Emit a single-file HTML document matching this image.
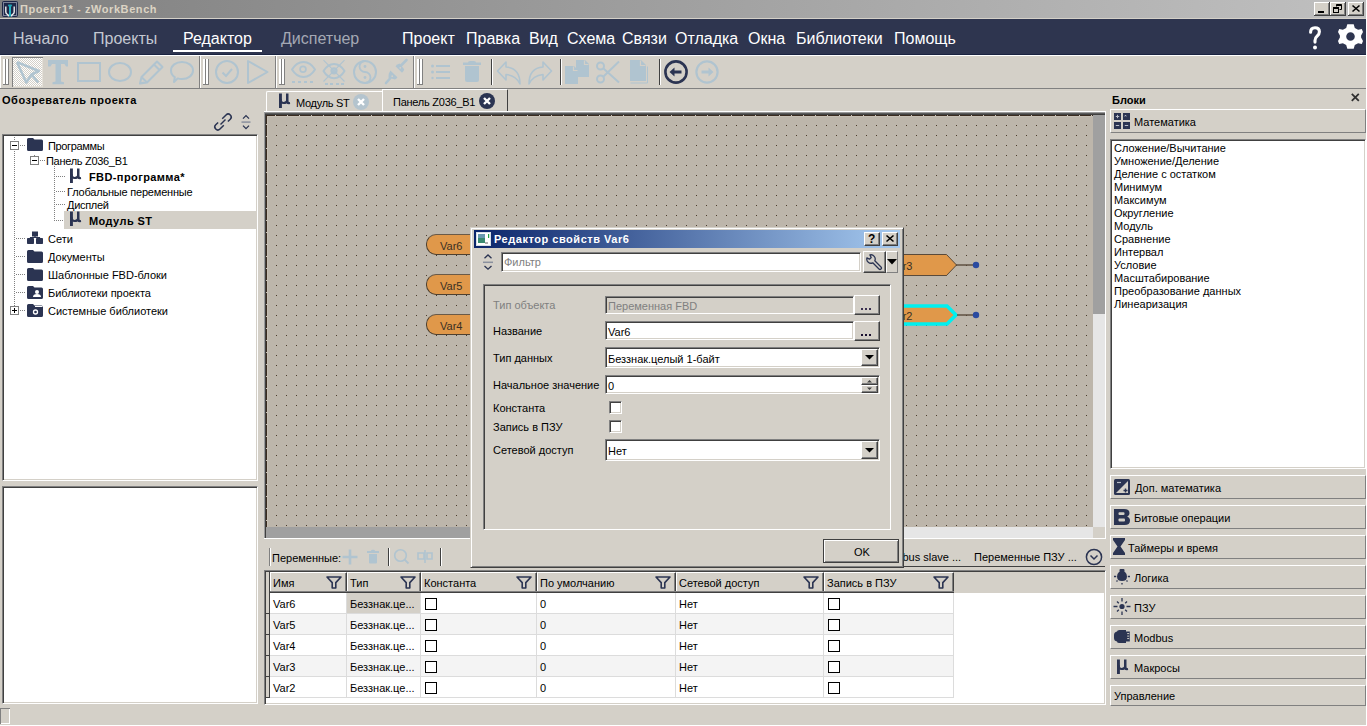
<!DOCTYPE html>
<html><head><meta charset="utf-8">
<style>
*{box-sizing:border-box;margin:0;padding:0}
html,body{width:1367px;height:726px;overflow:hidden}
body{position:relative;background:#d4d0c8;font-family:"Liberation Sans",sans-serif;font-size:11px;color:#000}
.a{position:absolute}
.t{position:absolute;white-space:nowrap;line-height:1}
svg{position:absolute;overflow:visible}
</style></head><body>

<!-- title bar -->
<div class="a" style="left:0;top:0;width:1367px;height:18px;background:linear-gradient(90deg,#808080 0%,#c0c0c0 100%)"></div>
<svg style="left:2px;top:1px" width="16" height="16" viewBox="0 0 16 16"><rect x="0" y="0" width="16" height="16" rx="2" fill="#1e2848"/><rect x="1.5" y="1.5" width="13" height="13" fill="none" stroke="#7a8298" stroke-width="1"/><path d="M3.8 5.5V11Q3.8 12.5 5.5 13.5Q6.5 14 6.5 15.5M12.2 5.5V11Q12.2 12.5 10.5 13.5Q9.5 14 9.5 15.5" stroke="#f0f0f0" stroke-width="1.4" fill="none"/><rect x="7" y="5" width="2" height="10.5" fill="#20b0c0"/><rect x="6" y="3.5" width="4" height="2" rx="0.8" fill="#20a0b0"/></svg>
<div class="t" style="left:20px;top:4px;font-weight:bold;letter-spacing:0.58px;color:#dcd4c4">Проект1* - zWorkBench</div>
<div class="a" style="left:1314px;top:2px;width:16px;height:14px;background:#d4d0c8;box-shadow:inset -1px -1px #404040,inset 1px 1px #fff,inset -2px -2px #808080"></div>
<div class="a" style="left:1318px;top:11px;width:6px;height:2px;background:#000"></div>
<div class="a" style="left:1330px;top:2px;width:16px;height:14px;background:#d4d0c8;box-shadow:inset -1px -1px #404040,inset 1px 1px #fff,inset -2px -2px #808080"></div>
<svg style="left:1333px;top:4px" width="10" height="10" viewBox="0 0 10 10"><path d="M3.5 0.5h5v5h-2M3.5 2.5V0.5" stroke="#000" fill="none"/><rect x="3.5" y="0.5" width="5" height="1.5" fill="#000"/><rect x="0.5" y="3.5" width="5" height="5" fill="none" stroke="#000"/><rect x="0.5" y="3.5" width="5" height="1.5" fill="#000"/></svg>
<div class="a" style="left:1348px;top:2px;width:16px;height:14px;background:#d4d0c8;box-shadow:inset -1px -1px #404040,inset 1px 1px #fff,inset -2px -2px #808080"></div>
<svg style="left:1352px;top:5px" width="8" height="7" viewBox="0 0 8 7"><path d="M0.5 0.5l7 6M7.5 0.5l-7 6" stroke="#000" stroke-width="1.6"/></svg>
<div class="a" style="left:1366px;top:0;width:1px;height:726px;background:#fff"></div>

<!-- nav bar -->
<div class="a" style="left:0;top:18px;width:1366px;height:1px;background:#d4d0c8"></div>
<div class="a" style="left:0;top:19px;width:1366px;height:35px;background:#2e354f"></div>
<div class="a" style="left:0;top:54px;width:1366px;height:1px;background:#1a2340"></div>
<div class="a" style="left:0;top:55px;width:1366px;height:1px;background:#fff"></div>
<div class="t" style="left:13px;top:31px;font-size:16px;color:#c4c8d2">Начало</div>
<div class="t" style="left:93px;top:31px;font-size:16px;color:#c4c8d2">Проекты</div>
<div class="t" style="left:183px;top:31px;font-size:16px;color:#fff">Редактор</div>
<div class="a" style="left:173px;top:50px;width:89px;height:2px;background:#fff"></div>
<div class="t" style="left:281px;top:31px;font-size:16px;color:#a4a8b4">Диспетчер</div>
<div class="t" style="left:402px;top:31px;font-size:16px;color:#fff">Проект</div>
<div class="t" style="left:466px;top:31px;font-size:16px;color:#fff">Правка</div>
<div class="t" style="left:529px;top:31px;font-size:16px;color:#fff">Вид</div>
<div class="t" style="left:567px;top:31px;font-size:16px;color:#fff">Схема</div>
<div class="t" style="left:622px;top:31px;font-size:16px;color:#fff">Связи</div>
<div class="t" style="left:675px;top:31px;font-size:16px;color:#fff">Отладка</div>
<div class="t" style="left:748px;top:31px;font-size:16px;color:#fff">Окна</div>
<div class="t" style="left:796px;top:31px;font-size:16px;color:#fff">Библиотеки</div>
<div class="t" style="left:894px;top:31px;font-size:16px;color:#fff">Помощь</div>
<svg style="left:1308px;top:26px" width="14" height="25" viewBox="0 0 14 25"><path d="M2.6 6.3Q2.6 1.7 7 1.7Q11.4 1.7 11.4 5.8Q11.4 8.3 9 10.2Q7 11.8 7 14.5v1.6" stroke="#fff" stroke-width="3.1" fill="none" stroke-linecap="round"/><circle cx="7" cy="21.6" r="2" fill="#fff"/></svg>
<svg style="left:1338px;top:24px" width="25" height="25" viewBox="-12.5 -12.5 25 25"><path fill="#fff" fill-rule="evenodd" d="M-3.2,-12.2 L3.2,-12.2 L4.3,-8.6 L7.6,-6.7 L11.3,-7.5 L12.5,-4.5 L10.6,-1.1 L10.6,1.1 L12.5,4.5 L11.3,7.5 L7.6,6.7 L4.3,8.6 L3.2,12.2 L-3.2,12.2 L-4.3,8.6 L-7.6,6.7 L-11.3,7.5 L-12.5,4.5 L-10.6,1.1 L-10.6,-1.1 L-12.5,-4.5 L-11.3,-7.5 L-7.6,-6.7 L-4.3,-8.6 Z M0,-4.3 A4.3,4.3 0 1,0 0,4.3 A4.3,4.3 0 1,0 0,-4.3Z"/></svg>

<!-- toolbar -->
<div class="a" style="left:0;top:56px;width:1px;height:32px;background:#fff"></div>
<div class="a" style="left:0;top:88px;width:1366px;height:1px;background:#808080"></div>
<div class="a" style="left:3px;top:59px;width:3px;height:26px;background:#fff;box-shadow:inset -1px -1px #808080"></div><div class="a" style="left:6px;top:59px;width:3px;height:26px;background:#fff;box-shadow:inset -1px -1px #808080"></div>
<div class="a" style="left:12px;top:57px;width:31px;height:30px;background-color:#fff;background-image:linear-gradient(45deg,#d4d0c8 25%,transparent 25%,transparent 75%,#d4d0c8 75%),linear-gradient(45deg,#d4d0c8 25%,transparent 25%,transparent 75%,#d4d0c8 75%);background-size:2px 2px;background-position:0 0,1px 1px;box-shadow:inset 1px 1px #808080,inset -1px -1px #e4e0d8"></div>
<svg style="left:0;top:0" width="730" height="90" viewBox="0 0 730 90" fill="none" stroke="#b0c4d0" stroke-width="2">
<path d="M17 62.2L38.8 71L31.5 74.5L38.2 82.5M17 62.2L26.3 82.5L31.5 74.5" stroke-linejoin="round" stroke-width="2.5"/>
<path d="M48 60h20v6.5h-2l-1.5-2.5h-3.5v17.5l3 .8v2H52.5v-2l3-.8V64h-3.5L50.5 66.5H48z" fill="#b0c4d0" stroke="none"/>
<rect x="78" y="63" width="22" height="18"/>
<ellipse cx="120" cy="72" rx="11" ry="9"/>
<path d="M140 83.5l1.5-6.5L157 61.5l5.5 5.5L147 82.5zM141.5 77l5.5 5.5M154 64.5l5.5 5.5M140 83.5l4-1" stroke-linejoin="round"/>
<path d="M182 62c6.2 0 11 3.6 11 8.5s-4.8 8.5-11 8.5c-1.5 0-3-.2-4.3-.6L174 82l.8-4.8C172.4 75.6 171 73.2 171 70.5 171 65.6 175.8 62 182 62z" stroke-linejoin="round"/>
<circle cx="227" cy="72" r="11"/>
<path d="M222.5 72.5l3.5 3.5 6-7"/>
<path d="M248 61v22l19.5-11z" stroke-linejoin="round"/>
<path d="M292 69.5C298 59.5 309 59.5 315 69.5C309 79.5 298 79.5 292 69.5z" stroke-linejoin="round"/>
<circle cx="303" cy="69.3" r="2.9" stroke-width="1.7"/>
<path d="M292 82h3M298 82h3M304 82h3M310 82h3" stroke-width="2"/>
<path d="M323.5 71C329 61.5 339 61.5 344.5 71C339 80.5 329 80.5 323.5 71z" stroke-linejoin="round"/>
<circle cx="334" cy="70.8" r="3.6" fill="#b0c4d0" stroke="none"/><circle cx="334" cy="70.8" r="1.2" fill="#c8d2d6" stroke="none"/>
<path d="M323.5 60.2l21 21.3M344.5 60.2l-21 21.3" stroke-width="1.1"/>
<path d="M325 84h3M330 84h3M336 84h3M341 84h3" stroke-width="2"/>
<circle cx="365" cy="72" r="11"/>
<path d="M365 61A5.5 5.5 0 0 0 365 72A5.5 5.5 0 0 1 365 83" stroke-width="1.8"/>
<circle cx="365" cy="66.5" r="1.4" fill="#b0c4d0" stroke="none"/><circle cx="365" cy="77.5" r="1.4" fill="#b0c4d0" stroke="none"/>
<path d="M395.5 66.2Q397 64 399.6 63.4L404.2 69.2Q403.8 71.5 402 72.8z" fill="#b0c4d0" stroke="none"/><path d="M401 65.5l5.5-5.5" stroke-width="2.6" stroke-linecap="round"/><path d="M390.4 70.5L397.4 77.3Q396.5 79 394.9 79.6L388.5 77.8Q388.3 73 390.4 70.5z" fill="#b0c4d0" stroke="none"/><path d="M390 78.5l-4 4.5" stroke-width="2.6" stroke-linecap="round"/><circle cx="400.3" cy="67.8" r="0.9" fill="#d4d0c8" stroke="none"/><circle cx="392.2" cy="76.2" r="0.9" fill="#d4d0c8" stroke="none"/>
<circle cx="432.5" cy="66" r="1.5" fill="#b0c4d0" stroke="none"/><circle cx="432.5" cy="72" r="1.5" fill="#b0c4d0" stroke="none"/><circle cx="432.5" cy="78" r="1.2" fill="#b0c4d0" stroke="none"/>
<path d="M436 66h14M436 72h14M436 78h14" stroke-width="2"/>
<path d="M463 62.5h18v2.5h-18z M468 62.5q0-1.5 2-1.5h4q2 0 2 1.5" fill="#b0c4d0" stroke="none"/>
<path d="M465 66h14v14q0 2-2 2h-10q-2 0-2-2z" fill="#b0c4d0" stroke="none"/>
<path d="M497.5 71l8.5-9v5q14 1 14 17q-4-8.5-14-9.5v5.5z" stroke-linejoin="round" stroke-width="1.6"/>
<path d="M551.5 71l-8.5-9v5q-14 1-14 17q4-8.5 14-9.5v5.5z" stroke-linejoin="round" stroke-width="1.6"/>
<path d="M576 60h9l4 4v13h-13zM565 66h9l4 4v14h-13z" fill="#b0c4d0" stroke="none"/>
<path d="M584.5 60.5v4h4M573.5 66.5v4h4" stroke="#d4d0c8" stroke-width="1.2"/>
<circle cx="600.5" cy="66" r="3.5"/><circle cx="600.5" cy="79" r="3.5"/>
<path d="M603.5 68.5l15.5 14M603.5 76.5l15.5-15"/>
<path d="M630 60h11l5 5v16h-16z" fill="#b0c4d0" stroke="none"/>
<path d="M640.5 60.5v5h5" stroke="#d4d0c8" stroke-width="1.2"/>
<path d="M647.5 66.5v16.5h-17" stroke-width="1"/>
<circle cx="676" cy="72" r="10.6" stroke="#2b3452" stroke-width="2.6"/>
<path d="M669.5 72l5-4.5v3h7v3h-7v3z" fill="#2b3452" stroke="none"/>
<circle cx="707" cy="72" r="10.6" stroke-width="2.2"/>
<path d="M713.5 72l-5-4.5v3h-7v3h7v3z" fill="#b0c4d0" stroke="none"/>
</svg>
<div class="a" style="left:199px;top:56px;width:1px;height:32px;background:#808080"></div><div class="a" style="left:200px;top:56px;width:1px;height:32px;background:#fff"></div>
<div class="a" style="left:203px;top:59px;width:3px;height:26px;background:#fff;box-shadow:inset -1px -1px #808080"></div><div class="a" style="left:206px;top:59px;width:3px;height:26px;background:#fff;box-shadow:inset -1px -1px #808080"></div>
<div class="a" style="left:275px;top:56px;width:1px;height:32px;background:#808080"></div><div class="a" style="left:276px;top:56px;width:1px;height:32px;background:#fff"></div>
<div class="a" style="left:279px;top:59px;width:3px;height:26px;background:#fff;box-shadow:inset -1px -1px #808080"></div><div class="a" style="left:282px;top:59px;width:3px;height:26px;background:#fff;box-shadow:inset -1px -1px #808080"></div>
<div class="a" style="left:413px;top:56px;width:1px;height:32px;background:#808080"></div><div class="a" style="left:414px;top:56px;width:1px;height:32px;background:#fff"></div>
<div class="a" style="left:417px;top:59px;width:3px;height:26px;background:#fff;box-shadow:inset -1px -1px #808080"></div><div class="a" style="left:420px;top:59px;width:3px;height:26px;background:#fff;box-shadow:inset -1px -1px #808080"></div>
<div class="a" style="left:491px;top:59px;width:1px;height:26px;background:#404040"></div><div class="a" style="left:492px;top:59px;width:1px;height:26px;background:#fff"></div>
<div class="a" style="left:560px;top:59px;width:1px;height:26px;background:#404040"></div><div class="a" style="left:561px;top:59px;width:1px;height:26px;background:#fff"></div>
<div class="a" style="left:659px;top:59px;width:1px;height:26px;background:#404040"></div><div class="a" style="left:660px;top:59px;width:1px;height:26px;background:#fff"></div>

<!-- left panel -->
<div class="t" style="left:2px;top:95px;font-weight:bold;letter-spacing:0.52px">Обозреватель проекта</div>
<svg style="left:214px;top:113px" width="20" height="20" viewBox="0 0 20 20"><g fill="none" stroke="#2b3452" stroke-width="1.5"><path transform="translate(12.6,5.6) rotate(-45)" d="M-3.2,-3 H2.2 A3 3 0 0 1 2.2 3 H-1.2"/><path transform="translate(5.4,12.4) rotate(-45)" d="M3.2,3 H-2.2 A3 3 0 0 1 -2.2 -3 H1.2"/><path d="M6.5 11.5l5-5"/></g></svg>
<svg style="left:240px;top:113px" width="12" height="18" viewBox="0 0 12 18"><path d="M3 5.6l3-3 3 3M3 12.6l3 3 3-3" fill="none" stroke="#2b3452" stroke-width="1.3"/><path d="M1.5 9.1h9" stroke="#8a909e" stroke-width="1.5"/></svg>
<div class="a" style="left:2px;top:134px;width:256px;height:347px;background:#fff;border-top:1px solid #808080;border-left:1px solid #808080;border-right:1px solid #fff;border-bottom:1px solid #fff;box-shadow:inset 1px 1px #404040,inset -1px -1px #d4d0c8"></div>
<div class="a" style="left:2px;top:486px;width:256px;height:218px;background:#fff;border-top:1px solid #808080;border-left:1px solid #808080;border-right:1px solid #fff;border-bottom:1px solid #fff;box-shadow:inset 1px 1px #404040,inset -1px -1px #d4d0c8"></div>
<div class="a" style="left:14px;top:137px;width:1px;height:174px;background-image:linear-gradient(#808080 50%,transparent 50%);background-size:1px 2px"></div>
<div class="a" style="left:34px;top:155px;width:1px;height:1px;background:#808080"></div>
<div class="a" style="left:54px;top:166px;width:1px;height:55px;background-image:linear-gradient(#808080 50%,transparent 50%);background-size:1px 2px"></div>
<div class="a" style="left:20px;top:145px;width:5px;height:1px;background-image:linear-gradient(90deg,#808080 50%,transparent 50%);background-size:2px 1px"></div>
<div class="a" style="left:40px;top:160px;width:6px;height:1px;background-image:linear-gradient(90deg,#808080 50%,transparent 50%);background-size:2px 1px"></div>
<div class="a" style="left:56px;top:176px;width:9px;height:1px;background-image:linear-gradient(90deg,#808080 50%,transparent 50%);background-size:2px 1px"></div>
<div class="a" style="left:56px;top:191px;width:9px;height:1px;background-image:linear-gradient(90deg,#808080 50%,transparent 50%);background-size:2px 1px"></div>
<div class="a" style="left:56px;top:204px;width:9px;height:1px;background-image:linear-gradient(90deg,#808080 50%,transparent 50%);background-size:2px 1px"></div>
<div class="a" style="left:56px;top:220px;width:9px;height:1px;background-image:linear-gradient(90deg,#808080 50%,transparent 50%);background-size:2px 1px"></div>
<div class="a" style="left:16px;top:238px;width:9px;height:1px;background-image:linear-gradient(90deg,#808080 50%,transparent 50%);background-size:2px 1px"></div>
<div class="a" style="left:16px;top:256px;width:9px;height:1px;background-image:linear-gradient(90deg,#808080 50%,transparent 50%);background-size:2px 1px"></div>
<div class="a" style="left:16px;top:274px;width:9px;height:1px;background-image:linear-gradient(90deg,#808080 50%,transparent 50%);background-size:2px 1px"></div>
<div class="a" style="left:16px;top:292px;width:9px;height:1px;background-image:linear-gradient(90deg,#808080 50%,transparent 50%);background-size:2px 1px"></div>
<div class="a" style="left:20px;top:310px;width:5px;height:1px;background-image:linear-gradient(90deg,#808080 50%,transparent 50%);background-size:2px 1px"></div>
<svg style="left:10px;top:141px" width="9" height="9" viewBox="0 0 9 9"><rect x="0.5" y="0.5" width="8" height="8" fill="#fff" stroke="#808080"/><path d="M2 4.5h5" stroke="#000"/></svg>
<svg style="left:30px;top:156px" width="9" height="9" viewBox="0 0 9 9"><rect x="0.5" y="0.5" width="8" height="8" fill="#fff" stroke="#808080"/><path d="M2 4.5h5" stroke="#000"/></svg>
<svg style="left:10px;top:306px" width="9" height="9" viewBox="0 0 9 9"><rect x="0.5" y="0.5" width="8" height="8" fill="#fff" stroke="#808080"/><path d="M2 4.5h5" stroke="#000"/><path d="M4.5 2v5" stroke="#000"/></svg>
<svg style="left:27px;top:138px" width="16" height="13" viewBox="0 0 16 13"><path d="M0 1.5Q0 0 1.5 0H6l1.5 1.5H14.5Q16 1.5 16 3V11.5Q16 13 14.5 13H1.5Q0 13 0 11.5z" fill="#2b3452"/></svg>
<div class="t" style="left:48px;top:141px;letter-spacing:-0.35px">Программы</div>
<div class="t" style="left:46px;top:156px;letter-spacing:-0.3px">Панель Z036_B1</div>
<svg style="left:70px;top:168px" width="12" height="15" viewBox="0 0 12 15"><rect x="0" y="0.5" width="2.9" height="14.5" fill="#2b3452"/><rect x="7" y="0.5" width="2.5" height="9.5" fill="#2b3452"/><path d="M1.5 6q0 4 3.2 4Q7.5 10 8.5 7.5M8.2 9.2q.6 1.2 2.8.8" stroke="#2b3452" stroke-width="2.2" fill="none"/></svg>
<div class="t" style="left:89px;top:172px;font-weight:bold;letter-spacing:0.4px;">FBD-программа*</div>
<div class="t" style="left:67px;top:187px;letter-spacing:-0.2px">Глобальные переменные</div>
<div class="t" style="left:67px;top:200px;letter-spacing:-0.3px">Дисплей</div>
<div class="a" style="left:64px;top:211px;width:192px;height:18px;background:#d4d0c8"></div>
<svg style="left:70px;top:211px" width="12" height="15" viewBox="0 0 12 15"><rect x="0" y="0.5" width="2.9" height="14.5" fill="#2b3452"/><rect x="7" y="0.5" width="2.5" height="9.5" fill="#2b3452"/><path d="M1.5 6q0 4 3.2 4Q7.5 10 8.5 7.5M8.2 9.2q.6 1.2 2.8.8" stroke="#2b3452" stroke-width="2.2" fill="none"/></svg>
<div class="t" style="left:89px;top:216px;font-weight:bold;letter-spacing:0.42px;">Модуль ST</div>
<svg style="left:27px;top:231px" width="16" height="14" viewBox="0 0 16 14"><rect x="5" y="0.5" width="6" height="5" fill="#2b3452"/><rect x="0" y="7" width="7" height="6" rx="0.8" fill="#2b3452"/><rect x="9" y="7" width="7" height="6" rx="0.8" fill="#2b3452"/><path d="M8 5v2M3.5 7V6.5h9V7" stroke="#2b3452" stroke-width="1.2" fill="none"/></svg>
<div class="t" style="left:48px;top:234px;">Сети</div>
<svg style="left:27px;top:250px" width="16" height="13" viewBox="0 0 16 13"><path d="M0 1.5Q0 0 1.5 0H6l1.5 1.5H14.5Q16 1.5 16 3V11.5Q16 13 14.5 13H1.5Q0 13 0 11.5z" fill="#2b3452"/></svg>
<div class="t" style="left:48px;top:252px;">Документы</div>
<svg style="left:27px;top:268px" width="16" height="13" viewBox="0 0 16 13"><path d="M0 1.5Q0 0 1.5 0H6l1.5 1.5H14.5Q16 1.5 16 3V11.5Q16 13 14.5 13H1.5Q0 13 0 11.5z" fill="#2b3452"/></svg>
<div class="t" style="left:48px;top:270px;">Шаблонные FBD-блоки</div>
<svg style="left:27px;top:286px" width="16" height="13" viewBox="0 0 16 13"><path d="M0 1.5Q0 0 1.5 0H6l1.5 1.5H14.5Q16 1.5 16 3V11.5Q16 13 14.5 13H1.5Q0 13 0 11.5z" fill="#2b3452"/><circle cx="10" cy="6" r="2" fill="#fff"/><path d="M6 11q0-3 4-3t4 3z" fill="#fff"/></svg>
<div class="t" style="left:48px;top:288px;">Библиотеки проекта</div>
<svg style="left:27px;top:304px" width="16" height="13" viewBox="0 0 16 13"><path d="M0 1.5Q0 0 1.5 0H6l1.5 1.5H14.5Q16 1.5 16 3V11.5Q16 13 14.5 13H1.5Q0 13 0 11.5z" fill="#2b3452"/><path d="M8 2.5h7.5" stroke="#fff" stroke-width="1"/><circle cx="8.5" cy="8" r="2" fill="none" stroke="#fff" stroke-width="1.3"/></svg>
<div class="t" style="left:48px;top:306px;">Системные библиотеки</div>
<div class="a" style="left:0;top:708px;width:10px;height:16px;box-shadow:inset 1px 1px #808080,inset -1px -1px #fff"></div>

<!-- canvas -->
<div class="a" style="left:266px;top:91px;width:117px;height:21px;background:#d4d0c8;border-left:1px solid #fff;border-top:1px solid #fff;border-top-left-radius:2px"></div>
<svg style="left:279px;top:93px" width="12" height="15" viewBox="0 0 12 15"><rect x="0" y="0.5" width="2.9" height="14.5" fill="#2b3452"/><rect x="7" y="0.5" width="2.5" height="9.5" fill="#2b3452"/><path d="M1.5 6q0 4 3.2 4Q7.5 10 8.5 7.5M8.2 9.2q.6 1.2 2.8.8" stroke="#2b3452" stroke-width="2.2" fill="none"/></svg>
<div class="t" style="left:296px;top:98px;letter-spacing:-0.3px">Модуль ST</div>
<svg style="left:353px;top:94px" width="16" height="16" viewBox="0 0 16 16"><circle cx="8" cy="8" r="8" fill="#b4c4ce"/><path d="M5 5l6 6M11 5l-6 6" stroke="#fff" stroke-width="2.4"/></svg>
<div class="a" style="left:382px;top:89px;width:126px;height:23px;background:#d4d0c8;border-left:1px solid #fff;border-top:1px solid #fff;border-right:1px solid #404040;border-top-right-radius:1px"></div>
<div class="t" style="left:393px;top:97px;letter-spacing:-0.25px">Панель Z036_B1</div>
<svg style="left:479px;top:93px" width="16" height="16" viewBox="0 0 16 16"><circle cx="8" cy="8" r="8" fill="#2b3452"/><path d="M5 5l6 6M11 5l-6 6" stroke="#fff" stroke-width="2.4"/></svg>
<div class="a" style="left:264px;top:111px;width:842px;height:1px;background:#fff"></div>
<div class="a" style="left:264px;top:112px;width:841px;height:426px;background:#9a9a9a"></div>
<div class="a" style="left:1105px;top:111px;width:1px;height:428px;background:#fff"></div>
<div class="a" style="left:264px;top:538px;width:842px;height:1px;background:#fff"></div>
<div class="a" style="left:265px;top:113px;width:840px;height:425px;background:#404040"></div><div class="a" style="left:265px;top:113px;width:840px;height:1px;background:#5c5c5c"></div>
<div class="a" style="left:266px;top:115px;width:827px;height:412px;background:#3a2c20"></div>
<div class="a" style="left:266px;top:115px;width:827px;height:1px;background-image:linear-gradient(90deg,transparent 9px,#d0c8bc 9px,#d0c8bc 10px,transparent 10px);background-size:12px 1px"></div><div class="a" style="left:266px;top:115px;width:1px;height:412px;background-image:linear-gradient(180deg,transparent 9px,#d0c8bc 9px,#d0c8bc 10px,transparent 10px);background-size:1px 12px"></div>
<svg style="left:267px;top:116px" width="826" height="411"><defs><pattern id="dp" width="10" height="10" patternUnits="userSpaceOnUse" x="-1" y="-1"><rect x="0" y="0" width="1" height="1" fill="#4a3a2a"/></pattern></defs><rect width="826" height="411" fill="#bdb6ab"/><rect width="826" height="411" fill="url(#dp)"/></svg>
<div class="a" style="left:267px;top:116px;width:826px;height:1px;background:#c6bfb4"></div><div class="a" style="left:267px;top:116px;width:1px;height:411px;background:#c6bfb4"></div>
<div class="a" style="left:1093px;top:115px;width:12px;height:412px;background:#e6e6e6"></div>
<div class="a" style="left:1093px;top:115px;width:12px;height:199px;background:#a0a0a0"></div>
<div class="a" style="left:266px;top:527px;width:827px;height:11px;background:#e6e6e6"></div>
<div class="a" style="left:266px;top:527px;width:300px;height:11px;background:#a0a0a0"></div>
<div class="a" style="left:1093px;top:527px;width:12px;height:11px;background:#d4d0c8"></div>
<div class="a" style="left:426px;top:234px;width:80px;height:21px;background:#e0984a;border:1px solid #4e4030;border-top-color:#6a5a48;border-radius:10px 0 0 10px"></div><div class="t" style="left:440px;top:241px;color:#3a3024">Var6</div>
<div class="a" style="left:426px;top:274px;width:80px;height:21px;background:#e0984a;border:1px solid #4e4030;border-top-color:#6a5a48;border-radius:10px 0 0 10px"></div><div class="t" style="left:440px;top:281px;color:#3a3024">Var5</div>
<div class="a" style="left:426px;top:314px;width:80px;height:21px;background:#e0984a;border:1px solid #4e4030;border-top-color:#6a5a48;border-radius:10px 0 0 10px"></div><div class="t" style="left:440px;top:321px;color:#3a3024">Var4</div>
<svg style="left:880px;top:240px" width="110" height="100" viewBox="880 240 110 100"><path d="M860 254.5H946.5L956.5 265L946.5 275.5H860z" fill="#e0984a" stroke="#5a4a3a"/><path d="M956 265H976" stroke="#5a4a3a" stroke-width="1.4"/><circle cx="976" cy="265" r="3.2" fill="#2a4aa0"/><path d="M860 306H947L956 315L947 324H860z" fill="#e0984a" stroke="#00f0f0" stroke-width="3.5"/><path d="M957 315H976" stroke="#5a4a3a" stroke-width="1.4"/><circle cx="976" cy="315" r="3.2" fill="#2a4aa0"/></svg>
<div class="t" style="left:890px;top:261px;color:#3a3024">Var3</div>
<div class="t" style="left:890px;top:311px;color:#3a3024">Var2</div>
<div class="a" style="left:269px;top:548px;width:1px;height:18px;background:#808080"></div><div class="a" style="left:270px;top:548px;width:1px;height:18px;background:#fff"></div>
<div class="t" style="left:272px;top:553px;">Переменные:</div>
<svg style="left:340px;top:546px" width="100" height="22" viewBox="340 546 100 22"><path d="M350 549.5v15M342.5 557h15" stroke="#b0c4d0" stroke-width="2.6"/><path d="M367 551h12v2h-12zM369 554h8v8.5q0 1-1 1h-6q-1 0-1-1z" fill="#b0c4d0"/><path d="M371 551q0-1.3 1.3-1.3h1.4q1.3 0 1.3 1.3" fill="#b0c4d0"/><circle cx="400.5" cy="555.5" r="5.8" fill="none" stroke="#b0c4d0" stroke-width="1.6"/><path d="M404.5 559.5l4 4" stroke="#b0c4d0" stroke-width="1.8"/><path d="M418 553h6v6h-6zM427 553h5v6h-5zM425 550v13" fill="none" stroke="#b0c4d0" stroke-width="1.6"/></svg>
<div class="a" style="left:388px;top:548px;width:1px;height:18px;background:#404040"></div><div class="a" style="left:389px;top:548px;width:1px;height:18px;background:#fff"></div>
<div class="a" style="left:440px;top:548px;width:1px;height:18px;background:#404040"></div><div class="a" style="left:441px;top:548px;width:1px;height:18px;background:#fff"></div>
<div class="a" style="left:471px;top:540px;width:1px;height:27px;background:#fff"></div>
<div class="a" style="left:471px;top:566px;width:634px;height:1px;background:#404040"></div>
<div class="t" style="left:881px;top:552px;">Modbus slave ...</div>
<div class="t" style="left:974px;top:552px;">Переменные ПЗУ ...</div>
<svg style="left:1085px;top:548px" width="18" height="18" viewBox="0 0 18 18"><circle cx="9" cy="9" r="7.6" fill="none" stroke="#2b3452" stroke-width="1.5"/><path d="M5.5 7.5l3.5 3.5 3.5-3.5" fill="none" stroke="#2b3452" stroke-width="1.5"/></svg>
<div class="a" style="left:264px;top:570px;width:842px;height:135px;background:#fff;border-top:1px solid #808080;border-left:1px solid #808080;border-right:1px solid #fff;border-bottom:1px solid #fff;box-shadow:inset 1px 1px #404040,inset -1px -1px #d4d0c8"></div>
<div class="a" style="left:266px;top:572px;width:838px;height:21px;background:#d4d0c8"></div>
<div class="a" style="left:266px;top:572px;width:4px;height:126px;background:#d4d0c8;box-shadow:inset -1px 0 #404040"></div>
<div class="a" style="left:270px;top:591px;width:684px;height:1px;background:#808080"></div><div class="a" style="left:270px;top:592px;width:684px;height:1px;background:#404040"></div>
<div class="a" style="left:270px;top:572px;width:77px;height:19px;border-left:1px solid #fff;border-top:1px solid #fff;border-right:1px solid #404040;box-shadow:inset -1px 0 #808080"></div>
<div class="t" style="left:273px;top:578px;">Имя</div>
<svg style="left:326px;top:576px" width="16" height="13" viewBox="0 0 16 13"><path d="M1 1h14l-5.2 5.6v5.4H6.2V6.6z" fill="none" stroke="#2b3452" stroke-width="1.6" stroke-linejoin="round"/></svg>
<div class="a" style="left:347px;top:572px;width:74px;height:19px;border-left:1px solid #fff;border-top:1px solid #fff;border-right:1px solid #404040;box-shadow:inset -1px 0 #808080"></div>
<div class="t" style="left:350px;top:578px;">Тип</div>
<svg style="left:400px;top:576px" width="16" height="13" viewBox="0 0 16 13"><path d="M1 1h14l-5.2 5.6v5.4H6.2V6.6z" fill="none" stroke="#2b3452" stroke-width="1.6" stroke-linejoin="round"/></svg>
<div class="a" style="left:421px;top:572px;width:116px;height:19px;border-left:1px solid #fff;border-top:1px solid #fff;border-right:1px solid #404040;box-shadow:inset -1px 0 #808080"></div>
<div class="t" style="left:424px;top:578px;">Константа</div>
<svg style="left:516px;top:576px" width="16" height="13" viewBox="0 0 16 13"><path d="M1 1h14l-5.2 5.6v5.4H6.2V6.6z" fill="none" stroke="#2b3452" stroke-width="1.6" stroke-linejoin="round"/></svg>
<div class="a" style="left:537px;top:572px;width:139px;height:19px;border-left:1px solid #fff;border-top:1px solid #fff;border-right:1px solid #404040;box-shadow:inset -1px 0 #808080"></div>
<div class="t" style="left:540px;top:578px;">По умолчанию</div>
<svg style="left:655px;top:576px" width="16" height="13" viewBox="0 0 16 13"><path d="M1 1h14l-5.2 5.6v5.4H6.2V6.6z" fill="none" stroke="#2b3452" stroke-width="1.6" stroke-linejoin="round"/></svg>
<div class="a" style="left:676px;top:572px;width:148px;height:19px;border-left:1px solid #fff;border-top:1px solid #fff;border-right:1px solid #404040;box-shadow:inset -1px 0 #808080"></div>
<div class="t" style="left:679px;top:578px;">Сетевой доступ</div>
<svg style="left:803px;top:576px" width="16" height="13" viewBox="0 0 16 13"><path d="M1 1h14l-5.2 5.6v5.4H6.2V6.6z" fill="none" stroke="#2b3452" stroke-width="1.6" stroke-linejoin="round"/></svg>
<div class="a" style="left:824px;top:572px;width:130px;height:19px;border-left:1px solid #fff;border-top:1px solid #fff;border-right:1px solid #404040;box-shadow:inset -1px 0 #808080"></div>
<div class="t" style="left:827px;top:578px;">Запись в ПЗУ</div>
<svg style="left:933px;top:576px" width="16" height="13" viewBox="0 0 16 13"><path d="M1 1h14l-5.2 5.6v5.4H6.2V6.6z" fill="none" stroke="#2b3452" stroke-width="1.6" stroke-linejoin="round"/></svg>
<div class="a" style="left:270px;top:593px;width:684px;height:21px;background:#fff;border-bottom:1px solid #dcdcdc"></div>
<div class="a" style="left:266px;top:613px;width:4px;height:1px;background:#404040"></div>
<div class="a" style="left:347px;top:593px;width:74px;height:20px;background:#d4d0c8"></div>
<div class="a" style="left:346px;top:593px;width:1px;height:21px;background:#dcdcdc"></div>
<div class="a" style="left:420px;top:593px;width:1px;height:21px;background:#dcdcdc"></div>
<div class="a" style="left:536px;top:593px;width:1px;height:21px;background:#dcdcdc"></div>
<div class="a" style="left:675px;top:593px;width:1px;height:21px;background:#dcdcdc"></div>
<div class="a" style="left:823px;top:593px;width:1px;height:21px;background:#dcdcdc"></div>
<div class="a" style="left:953px;top:593px;width:1px;height:21px;background:#dcdcdc"></div>
<div class="t" style="left:273px;top:599px;">Var6</div>
<div class="t" style="left:350px;top:599px;">Беззнак.це...</div>
<div class="a" style="left:425px;top:598px;width:12px;height:12px;border:1px solid #000;background:#fff"></div>
<div class="t" style="left:540px;top:599px;">0</div>
<div class="t" style="left:679px;top:599px;">Нет</div>
<div class="a" style="left:828px;top:598px;width:12px;height:12px;border:1px solid #000;background:#fff"></div>
<div class="a" style="left:270px;top:614px;width:684px;height:21px;background:#f4f4f4;border-bottom:1px solid #dcdcdc"></div>
<div class="a" style="left:266px;top:634px;width:4px;height:1px;background:#404040"></div>
<div class="a" style="left:346px;top:614px;width:1px;height:21px;background:#dcdcdc"></div>
<div class="a" style="left:420px;top:614px;width:1px;height:21px;background:#dcdcdc"></div>
<div class="a" style="left:536px;top:614px;width:1px;height:21px;background:#dcdcdc"></div>
<div class="a" style="left:675px;top:614px;width:1px;height:21px;background:#dcdcdc"></div>
<div class="a" style="left:823px;top:614px;width:1px;height:21px;background:#dcdcdc"></div>
<div class="a" style="left:953px;top:614px;width:1px;height:21px;background:#dcdcdc"></div>
<div class="t" style="left:273px;top:620px;">Var5</div>
<div class="t" style="left:350px;top:620px;">Беззнак.це...</div>
<div class="a" style="left:425px;top:619px;width:12px;height:12px;border:1px solid #000;background:#fff"></div>
<div class="t" style="left:540px;top:620px;">0</div>
<div class="t" style="left:679px;top:620px;">Нет</div>
<div class="a" style="left:828px;top:619px;width:12px;height:12px;border:1px solid #000;background:#fff"></div>
<div class="a" style="left:270px;top:635px;width:684px;height:21px;background:#fff;border-bottom:1px solid #dcdcdc"></div>
<div class="a" style="left:266px;top:655px;width:4px;height:1px;background:#404040"></div>
<div class="a" style="left:346px;top:635px;width:1px;height:21px;background:#dcdcdc"></div>
<div class="a" style="left:420px;top:635px;width:1px;height:21px;background:#dcdcdc"></div>
<div class="a" style="left:536px;top:635px;width:1px;height:21px;background:#dcdcdc"></div>
<div class="a" style="left:675px;top:635px;width:1px;height:21px;background:#dcdcdc"></div>
<div class="a" style="left:823px;top:635px;width:1px;height:21px;background:#dcdcdc"></div>
<div class="a" style="left:953px;top:635px;width:1px;height:21px;background:#dcdcdc"></div>
<div class="t" style="left:273px;top:641px;">Var4</div>
<div class="t" style="left:350px;top:641px;">Беззнак.це...</div>
<div class="a" style="left:425px;top:640px;width:12px;height:12px;border:1px solid #000;background:#fff"></div>
<div class="t" style="left:540px;top:641px;">0</div>
<div class="t" style="left:679px;top:641px;">Нет</div>
<div class="a" style="left:828px;top:640px;width:12px;height:12px;border:1px solid #000;background:#fff"></div>
<div class="a" style="left:270px;top:656px;width:684px;height:21px;background:#f4f4f4;border-bottom:1px solid #dcdcdc"></div>
<div class="a" style="left:266px;top:676px;width:4px;height:1px;background:#404040"></div>
<div class="a" style="left:346px;top:656px;width:1px;height:21px;background:#dcdcdc"></div>
<div class="a" style="left:420px;top:656px;width:1px;height:21px;background:#dcdcdc"></div>
<div class="a" style="left:536px;top:656px;width:1px;height:21px;background:#dcdcdc"></div>
<div class="a" style="left:675px;top:656px;width:1px;height:21px;background:#dcdcdc"></div>
<div class="a" style="left:823px;top:656px;width:1px;height:21px;background:#dcdcdc"></div>
<div class="a" style="left:953px;top:656px;width:1px;height:21px;background:#dcdcdc"></div>
<div class="t" style="left:273px;top:662px;">Var3</div>
<div class="t" style="left:350px;top:662px;">Беззнак.це...</div>
<div class="a" style="left:425px;top:661px;width:12px;height:12px;border:1px solid #000;background:#fff"></div>
<div class="t" style="left:540px;top:662px;">0</div>
<div class="t" style="left:679px;top:662px;">Нет</div>
<div class="a" style="left:828px;top:661px;width:12px;height:12px;border:1px solid #000;background:#fff"></div>
<div class="a" style="left:270px;top:677px;width:684px;height:21px;background:#fff;border-bottom:1px solid #dcdcdc"></div>
<div class="a" style="left:266px;top:697px;width:4px;height:1px;background:#404040"></div>
<div class="a" style="left:346px;top:677px;width:1px;height:21px;background:#dcdcdc"></div>
<div class="a" style="left:420px;top:677px;width:1px;height:21px;background:#dcdcdc"></div>
<div class="a" style="left:536px;top:677px;width:1px;height:21px;background:#dcdcdc"></div>
<div class="a" style="left:675px;top:677px;width:1px;height:21px;background:#dcdcdc"></div>
<div class="a" style="left:823px;top:677px;width:1px;height:21px;background:#dcdcdc"></div>
<div class="a" style="left:953px;top:677px;width:1px;height:21px;background:#dcdcdc"></div>
<div class="t" style="left:273px;top:683px;">Var2</div>
<div class="t" style="left:350px;top:683px;">Беззнак.це...</div>
<div class="a" style="left:425px;top:682px;width:12px;height:12px;border:1px solid #000;background:#fff"></div>
<div class="t" style="left:540px;top:683px;">0</div>
<div class="t" style="left:679px;top:683px;">Нет</div>
<div class="a" style="left:828px;top:682px;width:12px;height:12px;border:1px solid #000;background:#fff"></div>

<!-- right panel -->
<div class="t" style="left:1112px;top:95px;font-weight:bold;">Блоки</div>
<svg style="left:1351px;top:93px" width="9" height="9" viewBox="0 0 9 9"><path d="M0.8 0.8l7 7M7.8 0.8l-7 7" stroke="#303030" stroke-width="1.8"/></svg>
<div class="a" style="left:1110px;top:109px;width:256px;height:24px;background:#d4d0c8;border-top:1px solid #fff;border-left:1px solid #fff;border-right:1px solid #808080;border-bottom:1px solid #808080"></div>
<svg style="left:1114px;top:113px" width="16" height="16" viewBox="0 0 16 16"><rect x="0" y="0" width="7" height="7" fill="#2b3452"/><rect x="9" y="0" width="7" height="7" fill="#2b3452"/><rect x="0" y="9" width="7" height="7" fill="#2b3452"/><rect x="9" y="9" width="7" height="7" fill="#2b3452"/><path d="M3.5 1.8v3.4M1.8 3.5h3.4M10.8 2l1.4 1.4m0-1.4l-1.4 1.4M1.8 12.5h3.4M10.8 12.5h3.4M12.5 10.6v.1M12.5 14.3v.1" stroke="#b8bcc8" stroke-width="1"/></svg>
<div class="t" style="left:1134px;top:117px;">Математика</div>
<div class="a" style="left:1110px;top:139px;width:256px;height:330px;background:#fff;border-top:1px solid #808080;border-left:1px solid #808080;border-right:1px solid #fff;border-bottom:1px solid #fff;box-shadow:inset 1px 1px #404040,inset -1px -1px #d4d0c8"></div>
<div class="t" style="left:1114px;top:143px;">Сложение/Вычитание</div>
<div class="t" style="left:1114px;top:156px;">Умножение/Деление</div>
<div class="t" style="left:1114px;top:169px;">Деление с остатком</div>
<div class="t" style="left:1114px;top:182px;">Минимум</div>
<div class="t" style="left:1114px;top:195px;">Максимум</div>
<div class="t" style="left:1114px;top:208px;">Округление</div>
<div class="t" style="left:1114px;top:221px;">Модуль</div>
<div class="t" style="left:1114px;top:234px;">Сравнение</div>
<div class="t" style="left:1114px;top:247px;">Интервал</div>
<div class="t" style="left:1114px;top:260px;">Условие</div>
<div class="t" style="left:1114px;top:273px;">Масштабирование</div>
<div class="t" style="left:1114px;top:286px;">Преобразование данных</div>
<div class="t" style="left:1114px;top:299px;">Линеаризация</div>
<div class="a" style="left:1110px;top:475px;width:256px;height:24px;background:#d4d0c8;border-top:1px solid #fff;border-left:1px solid #fff;border-right:1px solid #808080;border-bottom:1px solid #808080"></div>
<div class="t" style="left:1135px;top:483px;">Доп. математика</div>
<div class="a" style="left:1110px;top:505px;width:256px;height:24px;background:#d4d0c8;border-top:1px solid #fff;border-left:1px solid #fff;border-right:1px solid #808080;border-bottom:1px solid #808080"></div>
<div class="t" style="left:1134px;top:513px;">Битовые операции</div>
<div class="a" style="left:1110px;top:535px;width:256px;height:24px;background:#d4d0c8;border-top:1px solid #fff;border-left:1px solid #fff;border-right:1px solid #808080;border-bottom:1px solid #808080"></div>
<div class="t" style="left:1128px;top:543px;">Таймеры и время</div>
<div class="a" style="left:1110px;top:565px;width:256px;height:24px;background:#d4d0c8;border-top:1px solid #fff;border-left:1px solid #fff;border-right:1px solid #808080;border-bottom:1px solid #808080"></div>
<div class="t" style="left:1134px;top:573px;">Логика</div>
<div class="a" style="left:1110px;top:595px;width:256px;height:24px;background:#d4d0c8;border-top:1px solid #fff;border-left:1px solid #fff;border-right:1px solid #808080;border-bottom:1px solid #808080"></div>
<div class="t" style="left:1134px;top:603px;">ПЗУ</div>
<div class="a" style="left:1110px;top:625px;width:256px;height:24px;background:#d4d0c8;border-top:1px solid #fff;border-left:1px solid #fff;border-right:1px solid #808080;border-bottom:1px solid #808080"></div>
<div class="t" style="left:1134px;top:633px;">Modbus</div>
<div class="a" style="left:1110px;top:655px;width:256px;height:24px;background:#d4d0c8;border-top:1px solid #fff;border-left:1px solid #fff;border-right:1px solid #808080;border-bottom:1px solid #808080"></div>
<div class="t" style="left:1134px;top:663px;">Макросы</div>
<svg style="left:1114px;top:479px" width="16" height="16" viewBox="0 0 16 16"><rect x="0" y="0" width="16" height="16" rx="1.5" fill="#2b3452"/><path d="M2 14L14 2V14z" fill="#d4d0c8"/><path d="M3 3.5h4" stroke="#b8bcc8" stroke-width="1.2"/><path d="M11.5 9.5v4M9.5 11.5h4" stroke="#2b3452" stroke-width="1.4"/></svg>
<svg style="left:1114px;top:509px" width="16" height="16" viewBox="0 0 16 16"><path d="M0 0H10Q15.5 0 15.5 4.2Q15.5 6.8 13.2 7.7Q16 8.6 16 11.5Q16 16 10.5 16H0z" fill="#2b3452"/><rect x="4.5" y="3.2" width="6" height="2.8" rx="1" fill="#d4d0c8"/><rect x="4.5" y="9.6" width="6.5" height="3" rx="1" fill="#d4d0c8"/></svg>
<svg style="left:1113px;top:538px" width="12" height="17" viewBox="0 0 12 17"><path d="M0 0H12V2L7.5 8.5L12 15V17H0V15L4.5 8.5L0 2z" fill="#2b3452"/></svg>
<svg style="left:1113px;top:568px" width="18" height="17" viewBox="0 0 18 17"><rect x="6.5" y="1" width="5" height="4" rx="1" fill="#2b3452"/><path d="M6 4H12Q14 5.5 14 8.5Q14 13 9 13T4 8.5Q4 5.5 6 4z" fill="#2b3452"/><path d="M1 8.5h2.2M14.8 8.5h2.2M9 15v1.5M3.5 13.5l1-1M14.5 13.5l-1-1" stroke="#2b3452" stroke-width="1.3"/></svg>
<svg style="left:1113px;top:598px" width="18" height="17" viewBox="0 0 18 17"><circle cx="9" cy="8.5" r="2.6" fill="#2b3452"/><path d="M9 0v3.5M9 13.5v3.5M0.5 8.5h4M13.5 8.5h4M4 3.5l1.8 1.8M14 3.5l-1.8 1.8M4 13.5l1.8-1.8M14 13.5l-1.8-1.8" stroke="#2b3452" stroke-width="1.3"/></svg>
<svg style="left:1114px;top:630px" width="17" height="13" viewBox="0 0 17 13"><path d="M5.5 0H12V13H5.5Q3 13 3 11.5Q0 11 0 8V5Q0 2 3 1.5Q3 0 5.5 0z" fill="#2b3452"/><rect x="12" y="1.5" width="3.8" height="10" fill="#2b3452"/><path d="M13.2 3.6h2M13.2 6.1h2M13.2 8.6h2" stroke="#d4d0c8" stroke-width="1"/></svg>
<svg style="left:1117px;top:659px" width="12" height="15" viewBox="0 0 12 15"><rect x="0" y="0.5" width="2.9" height="14.5" fill="#2b3452"/><rect x="7" y="0.5" width="2.5" height="9.5" fill="#2b3452"/><path d="M1.5 6q0 4 3.2 4Q7.5 10 8.5 7.5M8.2 9.2q.6 1.2 2.8.8" stroke="#2b3452" stroke-width="2.2" fill="none"/></svg>
<div class="a" style="left:1110px;top:685px;width:256px;height:21px;background:#d4d0c8;border-top:1px solid #fff;border-left:1px solid #fff;border-right:1px solid #808080;border-bottom:1px solid #808080"></div>
<div class="t" style="left:1114px;top:691px;">Управление</div>

<!-- dialog -->
<div class="a" style="left:470px;top:227px;width:434px;height:341px;background:#d4d0c8;border-top:1px solid #d4d0c8;border-left:1px solid #d4d0c8;border-right:1px solid #404040;border-bottom:1px solid #404040;box-shadow:inset 1px 1px #fff,inset -1px -1px #808080"></div>
<div class="a" style="left:474px;top:230px;width:426px;height:18px;background:linear-gradient(90deg,#0a246a,#a6caf0)"></div>
<svg style="left:476px;top:232px" width="15" height="14" viewBox="0 0 15 14"><rect x="0" y="0" width="15" height="14" fill="#d8e0e8"/><rect x="1" y="1" width="13" height="12" fill="#fff"/><rect x="2" y="2" width="7" height="9" fill="#3a8a70"/><rect x="2" y="2" width="7" height="4" fill="#6a9ab0"/><rect x="12" y="2" width="1.2" height="4" fill="#20a040"/><rect x="9" y="10" width="3" height="2" fill="#b0b0b0"/></svg>
<div class="t" style="left:494px;top:234px;font-weight:bold;letter-spacing:0.53px;color:#fff">Редактор свойств Var6</div>
<div class="a" style="left:864px;top:232px;width:16px;height:14px;background:#d4d0c8;border-top:1px solid #fff;border-left:1px solid #fff;border-right:1px solid #404040;border-bottom:1px solid #404040;box-shadow:inset -1px -1px #808080"></div>
<div class="t" style="left:868px;top:233px;font-weight:bold;font-size:12px;color:#000">?</div>
<div class="a" style="left:882px;top:232px;width:16px;height:14px;background:#d4d0c8;border-top:1px solid #fff;border-left:1px solid #fff;border-right:1px solid #404040;border-bottom:1px solid #404040;box-shadow:inset -1px -1px #808080"></div>
<svg style="left:886px;top:235px" width="8" height="7" viewBox="0 0 8 7"><path d="M0.5 0.5l7 6M7.5 0.5l-7 6" stroke="#000" stroke-width="1.6"/></svg>
<svg style="left:482px;top:253px" width="12" height="18" viewBox="0 0 12 18"><path d="M2.5 5.2l3.5-3.2 3.5 3.2M2.5 13l3.5 3.2 3.5-3.2" fill="none" stroke="#2b3452" stroke-width="1.3"/><path d="M1 9.3h10" stroke="#8a909e" stroke-width="1.5"/></svg>
<div class="a" style="left:501px;top:252px;width:360px;height:20px;background:#fff;border-top:1px solid #808080;border-left:1px solid #808080;border-right:1px solid #fff;border-bottom:1px solid #fff;box-shadow:inset 1px 1px #404040,inset -1px -1px #d4d0c8"></div>
<div class="t" style="left:504px;top:257px;color:#808080;">Фильтр</div>
<div class="a" style="left:863px;top:251px;width:23px;height:22px;background:#d4d0c8;border-top:1px solid #fff;border-left:1px solid #fff;border-right:1px solid #404040;border-bottom:1px solid #404040;box-shadow:inset -1px -1px #808080"></div>
<svg style="left:866px;top:254px" width="17" height="16" viewBox="0 0 17 16"><path d="M0.94 3.91A4.2 4.2 0 0 0 6.77 8.8L13 15A1.41 1.41 0 0 0 15 13L8.8 6.77A4.2 4.2 0 0 0 3.91 0.94L5.2 3.5L3.5 5.2Z" fill="none" stroke="#2b3452" stroke-width="1.3" stroke-linejoin="round"/></svg>
<div class="a" style="left:886px;top:251px;width:12px;height:22px;background:#d4d0c8;border-top:1px solid #fff;border-left:1px solid #fff;border-right:1px solid #808080;border-bottom:1px solid #808080"></div>
<svg style="left:887px;top:259px" width="10" height="6" viewBox="0 0 10 6"><path d="M0 0h10L5 5.5z" fill="#000"/></svg>
<div class="a" style="left:483px;top:284px;width:408px;height:246px;border-top:1px solid #808080;border-left:1px solid #808080;border-right:1px solid #fff;border-bottom:1px solid #fff;box-shadow:inset 1px 1px #404040"></div>
<div class="t" style="left:493px;top:300px;color:#808080;">Тип объекта</div>
<div class="a" style="left:605px;top:296px;width:249px;height:18px;background:#d4d0c8;border-top:1px solid #808080;border-left:1px solid #808080;border-right:1px solid #fff;border-bottom:1px solid #fff;box-shadow:inset 1px 1px #404040,inset -1px -1px #d4d0c8"></div>
<div class="t" style="left:608px;top:301px;color:#808080;">Переменная FBD</div>
<div class="a" style="left:854px;top:295px;width:26px;height:20px;background:#d4d0c8;border-top:1px solid #fff;border-left:1px solid #fff;border-right:1px solid #404040;border-bottom:1px solid #404040;box-shadow:inset -1px -1px #808080"></div>
<div class="a" style="left:861px;top:308px;width:2px;height:2px;background:#3a3050"></div><div class="a" style="left:865px;top:308px;width:2px;height:2px;background:#3a3050"></div><div class="a" style="left:869px;top:308px;width:2px;height:2px;background:#3a3050"></div>
<div class="t" style="left:493px;top:326px;">Название</div>
<div class="a" style="left:605px;top:321px;width:249px;height:19px;background:#fff;border-top:1px solid #808080;border-left:1px solid #808080;border-right:1px solid #fff;border-bottom:1px solid #fff;box-shadow:inset 1px 1px #404040,inset -1px -1px #d4d0c8"></div>
<div class="t" style="left:608px;top:327px;">Var6</div>
<div class="a" style="left:854px;top:321px;width:26px;height:20px;background:#d4d0c8;border-top:1px solid #fff;border-left:1px solid #fff;border-right:1px solid #404040;border-bottom:1px solid #404040;box-shadow:inset -1px -1px #808080"></div>
<div class="a" style="left:861px;top:334px;width:2px;height:2px;background:#1a1030"></div><div class="a" style="left:865px;top:334px;width:2px;height:2px;background:#1a1030"></div><div class="a" style="left:869px;top:334px;width:2px;height:2px;background:#1a1030"></div>
<div class="t" style="left:493px;top:353px;">Тип данных</div>
<div class="a" style="left:605px;top:347px;width:275px;height:21px;background:#fff;border-top:1px solid #808080;border-left:1px solid #808080;border-right:1px solid #fff;border-bottom:1px solid #fff;box-shadow:inset 1px 1px #404040,inset -1px -1px #d4d0c8"></div>
<div class="t" style="left:608px;top:354px;">Беззнак.целый 1-байт</div>
<div class="a" style="left:861px;top:349px;width:17px;height:17px;background:#d4d0c8;border-top:1px solid #fff;border-left:1px solid #fff;border-right:1px solid #404040;border-bottom:1px solid #404040;box-shadow:inset -1px -1px #808080"></div>
<svg style="left:865px;top:355px" width="9" height="5" viewBox="0 0 9 5"><path d="M0 0h9L4.5 4.5z" fill="#000"/></svg>
<div class="t" style="left:493px;top:380px;">Начальное значение</div>
<div class="a" style="left:605px;top:375px;width:275px;height:19px;background:#fff;border-top:1px solid #808080;border-left:1px solid #808080;border-right:1px solid #fff;border-bottom:1px solid #fff;box-shadow:inset 1px 1px #404040,inset -1px -1px #d4d0c8"></div>
<div class="t" style="left:608px;top:381px;">0</div>
<div class="a" style="left:861px;top:377px;width:17px;height:8px;background:#d4d0c8;border-top:1px solid #fff;border-left:1px solid #fff;border-right:1px solid #404040;border-bottom:1px solid #404040;box-shadow:inset -1px -1px #808080"></div>
<div class="a" style="left:861px;top:385px;width:17px;height:8px;background:#d4d0c8;border-top:1px solid #fff;border-left:1px solid #fff;border-right:1px solid #404040;border-bottom:1px solid #404040;box-shadow:inset -1px -1px #808080"></div>
<svg style="left:866px;top:379px" width="7" height="12" viewBox="0 0 7 12"><path d="M1 3.5L3.5 1 6 3.5zM1 8.5L3.5 11 6 8.5z" fill="#404040"/></svg>
<div class="t" style="left:493px;top:403px;">Константа</div>
<div class="a" style="left:609px;top:401px;width:13px;height:13px;background:#fff;border-top:1px solid #808080;border-left:1px solid #808080;border-right:1px solid #fff;border-bottom:1px solid #fff;box-shadow:inset 1px 1px #404040,inset -1px -1px #d4d0c8"></div>
<div class="t" style="left:493px;top:422px;">Запись в ПЗУ</div>
<div class="a" style="left:609px;top:420px;width:13px;height:13px;background:#fff;border-top:1px solid #808080;border-left:1px solid #808080;border-right:1px solid #fff;border-bottom:1px solid #fff;box-shadow:inset 1px 1px #404040,inset -1px -1px #d4d0c8"></div>
<div class="t" style="left:493px;top:445px;">Сетевой доступ</div>
<div class="a" style="left:605px;top:439px;width:275px;height:22px;background:#fff;border-top:1px solid #808080;border-left:1px solid #808080;border-right:1px solid #fff;border-bottom:1px solid #fff;box-shadow:inset 1px 1px #404040,inset -1px -1px #d4d0c8"></div>
<div class="t" style="left:608px;top:446px;">Нет</div>
<div class="a" style="left:861px;top:441px;width:17px;height:18px;background:#d4d0c8;border-top:1px solid #fff;border-left:1px solid #fff;border-right:1px solid #404040;border-bottom:1px solid #404040;box-shadow:inset -1px -1px #808080"></div>
<svg style="left:865px;top:448px" width="9" height="5" viewBox="0 0 9 5"><path d="M0 0h9L4.5 4.5z" fill="#000"/></svg>
<div class="a" style="left:823px;top:539px;width:76px;height:24px;background:#d4d0c8;border:1px solid #404040;box-shadow:inset 1px 1px #fff,inset -1px -1px #808080"></div>
<div class="t" style="left:854px;top:547px;">OK</div>

<div class="a" style="left:0;top:725px;width:1367px;height:1px;background:#fff"></div>
</body></html>
